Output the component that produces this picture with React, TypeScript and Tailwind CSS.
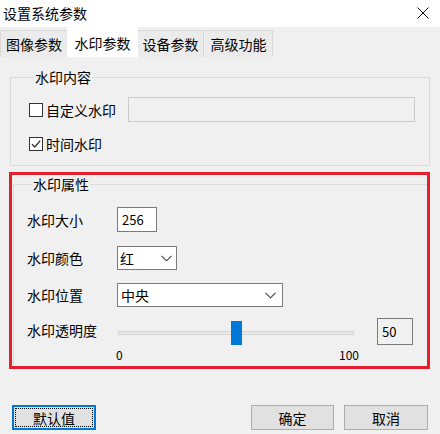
import React from "react";

const font = { fontFamily: '"Noto Sans CJK SC", "Noto Sans", sans-serif' };

function Chevron() {
  return (
    <svg width="11" height="7" viewBox="0 0 11 7" className="shrink-0">
      <path d="M0.5 0.8 L5.5 5.8 L10.5 0.8" fill="none" stroke="#404040" strokeWidth="1.1" />
    </svg>
  );
}

function CheckBox({ checked }: { checked?: boolean }) {
  return (
    <div className="w-[14px] h-[14px] border border-[#333333] bg-white flex items-center justify-center shrink-0">
      {checked && (
        <svg width="12" height="12" viewBox="0 0 12 12">
          <path d="M2 6.2 L4.8 9 L10.2 2.8" fill="none" stroke="#333333" strokeWidth="1.3" />
        </svg>
      )}
    </div>
  );
}

export default function App() {
  return (
    <div className="w-[440px] h-[434px] bg-[#f0f0f0] text-black overflow-hidden text-[14px]" style={font}>
      {/* Title bar */}
      <div className="h-[27px] bg-white flex items-center justify-between pl-[3px] pr-[11px]">
        <span className="text-[14px] leading-[16px] -mt-[2px]">设置系统参数</span>
        <svg width="12" height="12" viewBox="0 0 12 12" className="-mt-[2px]">
          <path d="M0.5 0.5 L11.5 11.5 M11.5 0.5 L0.5 11.5" stroke="#111" strokeWidth="1" />
        </svg>
      </div>

      {/* Tabs */}
      <div className="h-[30px] flex items-end">
        <div className="w-[67px] h-[27px] bg-[#ebebeb] border-t border-l border-[#d9d9d9] flex items-center justify-center leading-[16px]">图像参数</div>
        <div className="w-[71px] h-[30px] bg-white flex items-center justify-center leading-[16px] pt-[2px]">水印参数</div>
        <div className="w-[66px] h-[27px] bg-[#ebebeb] border-t border-r border-[#d9d9d9] flex items-center justify-center leading-[16px]">设备参数</div>
        <div className="w-[68px] h-[27px] bg-[#ebebeb] border-t border-r border-[#d9d9d9] flex items-center justify-center leading-[16px] ml-[1px]">高级功能</div>
      </div>

      {/* Panel */}
      <div className="pt-[11px]">
        {/* Group 1 */}
        <fieldset className="ml-[10px] w-[420px] border border-[#dcdcdc] pl-[18px] pb-[11px]">
          <legend className="ml-[5px] px-[1px] leading-[18px]">水印内容</legend>
          <div className="mt-[11px] flex items-center h-[25px]">
            <CheckBox />
            <span className="ml-[3px] leading-[16px]">自定义水印</span>
            <div className="ml-[12px] w-[287px] h-[25px] border border-[#cccccc] bg-[#f0f0f0]" />
          </div>
          <div className="mt-[12px] flex items-center h-[20px]">
            <CheckBox checked />
            <span className="ml-[3px] leading-[16px]">时间水印</span>
          </div>
        </fieldset>

        {/* Highlighted group 2 */}
        <div className="mt-[6px] ml-[9px] w-[421px] h-[197px] border-[3px] border-[#e4202c] overflow-hidden">
          <fieldset className="ml-[1px] h-[200px] border-l border-t border-[#dcdcdc] pl-[13px]">
            <legend className="ml-[5px] px-[1px] leading-[18px]">水印属性</legend>
            {/* size */}
            <div className="mt-[14px] flex items-center h-[25px]">
              <span className="w-[90px] leading-[16px]">水印大小</span>
              <div className="w-[40px] h-[25px] border border-[#7a7a7a] bg-white flex items-center pl-[4px] text-[13px] leading-[16px]">256</div>
            </div>
            {/* color */}
            <div className="mt-[14px] flex items-center h-[24px]">
              <span className="w-[90px] leading-[16px]">水印颜色</span>
              <div className="w-[60px] h-[24px] border border-[#7a7a7a] bg-white flex items-center justify-between pl-[2px] pr-[4px] leading-[16px]">
                <span>红</span>
                <Chevron />
              </div>
            </div>
            {/* position */}
            <div className="mt-[13px] flex items-center h-[24px]">
              <span className="w-[90px] leading-[16px]">水印位置</span>
              <div className="w-[166px] h-[24px] border border-[#7a7a7a] bg-white flex items-center justify-between pl-[3px] pr-[6px] leading-[16px]">
                <span>中央</span>
                <Chevron />
              </div>
            </div>
            {/* transparency */}
            <div className="mt-[11px] flex items-center h-[27px]">
              <span className="w-[91px] leading-[16px] -mt-[4px]">水印透明度</span>
              <div className="relative w-[237px] h-[24px] mt-[3px]">
                <div className="absolute left-0 top-[10px] w-[236px] h-[4px] bg-[#e7e7e7] border border-[#d6d6d6]" />
                <div className="absolute left-[113px] top-0 w-[11px] h-[24px] bg-[#0078d7]" />
              </div>
              <div className="ml-[22px] w-[36px] h-[27px] border border-[#7a7a7a] bg-[#f0f0f0] flex items-center pl-[4px] text-[13px] leading-[16px]">50</div>
            </div>
            <div className="mt-[3px] ml-[89px] w-[243px] flex justify-between text-[12px] leading-[14px]">
              <span>0</span>
              <span>100</span>
            </div>
          </fieldset>
        </div>

        {/* Buttons */}
        <div className="mt-[36px] flex items-center justify-between px-[12px]">
          <div className="w-[84px] h-[25px] border-2 border-[#0078d7] bg-[#e1e1e1] p-[1px]">
            <div className="w-full h-full border border-dotted border-[#000] flex items-center justify-center leading-[16px]">默认值</div>
          </div>
          <div className="flex gap-[10px]">
            <div className="w-[83px] h-[25px] border border-[#adadad] bg-[#e1e1e1] flex items-center justify-center leading-[16px]">确定</div>
            <div className="w-[84px] h-[25px] border border-[#adadad] bg-[#e1e1e1] flex items-center justify-center leading-[16px]">取消</div>
          </div>
        </div>
      </div>
    </div>
  );
}
